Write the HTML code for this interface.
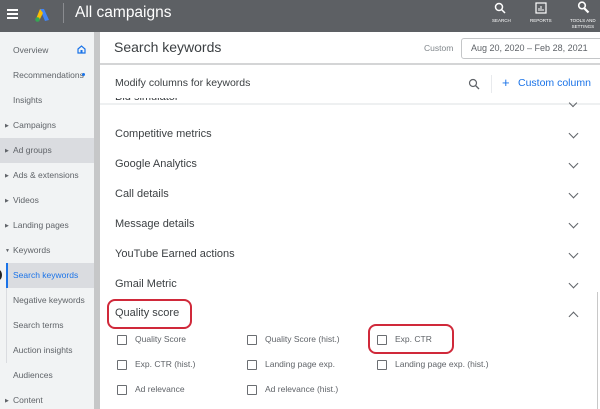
<!DOCTYPE html>
<html><head><style>
*{margin:0;padding:0;box-sizing:border-box}
body{width:600px;height:409px;overflow:hidden;font-family:"Liberation Sans",Arial,sans-serif;background:#fff;position:relative}
.hdr{position:absolute;left:0;top:0;width:600px;height:32px;background:#5d6064}
.abs{position:absolute;white-space:nowrap}
.side{position:absolute;left:0;top:32px;width:94px;height:377px;background:#f1f3f4}
.strip{position:absolute;left:94px;top:32px;width:6px;height:377px;background:#c6c7c8}
.si{position:absolute;left:13px;font-size:8.5px;color:#5f6368}
.arr{position:absolute;left:5px;font-size:5px;color:#5f6368}
.row{position:absolute;left:115px;font-size:11px;color:#3c4043}
.chev{position:absolute;left:570px;width:7px;height:7px;border-right:1.3px solid #5f6368;border-bottom:1.3px solid #5f6368;transform:rotate(45deg)}
.cb{position:absolute;width:10px;height:10px;border:1.3px solid #6b6e72;border-radius:1px}
.cl{position:absolute;font-size:8.5px;color:#5f6368}
.red{position:absolute;border:2px solid #d0293a;border-radius:8px}
</style></head><body>
<div class="hdr">
 <div class="abs" style="left:7px;top:9px;width:11px;height:2px;background:#fff;box-shadow:0 4px 0 #fff,0 8px 0 #fff"></div>
 <svg class="abs" style="left:34px;top:7px" width="16" height="16" viewBox="0 0 16 16"><path d="M6 2 L10 2 L15 13 L11 14Z" fill="#4285f4"/><path d="M6 2 L9 6 L5 14 L2 12Z" fill="#fbbc04"/><circle cx="3.5" cy="12.5" r="2.3" fill="#34a853"/></svg>
 <div class="abs" style="left:63px;top:3px;width:1px;height:20px;background:#8a8c90"></div>
 <div class="abs" style="left:75px;top:4px;font-size:15.5px;color:#fff">All campaigns</div>
 <svg class="abs" style="left:494px;top:2px" width="12" height="12" viewBox="0 0 12 12"><circle cx="5" cy="5" r="3.5" stroke="#fff" stroke-width="1.5" fill="none"/><path d="M7.5 7.5L11 11" stroke="#fff" stroke-width="1.5"/></svg>
 <div class="abs" style="left:492px;top:18px;font-size:4.5px;color:#fff">SEARCH</div>
 <svg class="abs" style="left:535px;top:2px" width="12" height="12" viewBox="0 0 12 12"><rect x="1" y="1" width="10" height="10" stroke="#fff" stroke-width="1.2" fill="none"/><path d="M4 9V6M6 9V4M8 9V7" stroke="#fff" stroke-width="1"/></svg>
 <div class="abs" style="left:530px;top:18px;font-size:4.5px;color:#fff">REPORTS</div>
 <svg class="abs" style="left:577px;top:1px" width="13" height="13" viewBox="0 0 13 13"><circle cx="5" cy="4.5" r="3.3" stroke="#fff" stroke-width="1.6" fill="none"/><path d="M7 7L11.5 11.5" stroke="#fff" stroke-width="2.2"/></svg>
 <div class="abs" style="left:570px;top:18px;font-size:4.5px;color:#fff;text-align:center;line-height:6px">TOOLS AND<br>SETTINGS</div>
</div>
<div class="side">
 <div class="abs" style="left:0;top:106px;width:94px;height:25px;background:#dadce0"></div>
 <div class="abs" style="left:6px;top:231px;width:88px;height:25px;background:#dadce0"></div>
 <div class="abs" style="left:6px;top:231px;width:2px;height:25px;background:#1a73e8"></div>
 <div class="abs" style="left:6px;top:256px;width:1px;height:75px;background:#dadce0"></div>
 <div class="abs" style="left:-4px;top:238px;width:6px;height:10px;border-radius:50%;background:#222"></div>
</div>
<div class="si" style="top:45px">Overview</div>
<svg class="abs" style="left:77px;top:45px" width="9" height="9" viewBox="0 0 9 9"><path d="M1 4L4.5 1L8 4V8H1Z" fill="none" stroke="#1a73e8" stroke-width="1.2"/><rect x="3.5" y="5" width="2" height="3" fill="#1a73e8"/></svg>
<div class="si" style="top:70px">Recommendations</div>
<div class="abs" style="left:82px;top:73px;width:3px;height:3px;border-radius:50%;background:#1a73e8"></div>
<div class="si" style="top:95px">Insights</div>
<div class="arr" style="top:123px">▶</div><div class="si" style="top:120px">Campaigns</div>
<div class="arr" style="top:148px">▶</div><div class="si" style="top:145px">Ad groups</div>
<div class="arr" style="top:173px">▶</div><div class="si" style="top:170px">Ads &amp; extensions</div>
<div class="arr" style="top:198px">▶</div><div class="si" style="top:195px">Videos</div>
<div class="arr" style="top:223px">▶</div><div class="si" style="top:220px">Landing pages</div>
<div class="arr" style="top:248px">▼</div><div class="si" style="top:245px">Keywords</div>
<div class="si" style="top:270px;color:#1a73e8">Search keywords</div>
<div class="si" style="top:295px">Negative keywords</div>
<div class="si" style="top:320px">Search terms</div>
<div class="si" style="top:345px">Auction insights</div>
<div class="si" style="top:370px">Audiences</div>
<div class="arr" style="top:398px">▶</div><div class="si" style="top:395px">Content</div>
<div class="strip"></div>

<div class="abs" style="left:100px;top:63px;width:500px;height:2px;background:#d4d5d6"></div>
<div class="abs" style="left:114px;top:39px;font-size:14px;color:#3c4043">Search keywords</div>
<div class="abs" style="left:424px;top:43px;font-size:8.5px;color:#80868b">Custom</div>
<div class="abs" style="left:461px;top:38px;width:145px;height:21px;border:1px solid #c4c6c8;border-radius:3px"></div>
<div class="abs" style="left:471px;top:43px;font-size:9px;color:#5f6368">Aug 20, 2020 – Feb 28, 2021</div>

<div class="abs" style="left:115px;top:77px;font-size:10.5px;color:#3c4043">Modify columns for keywords</div>
<svg class="abs" style="left:468px;top:78px" width="12" height="12" viewBox="0 0 12 12"><circle cx="5" cy="5" r="3.5" stroke="#5f6368" stroke-width="1.2" fill="none"/><path d="M7.5 7.5L11 11" stroke="#5f6368" stroke-width="1.3"/></svg>
<div class="abs" style="left:491px;top:75px;width:1px;height:18px;background:#e8eaed"></div>
<div class="abs" style="left:502px;top:75px;font-size:13px;color:#1a73e8">+</div>
<div class="abs" style="left:518px;top:77px;font-size:10.5px;color:#1a73e8">Custom column</div>
<div class="abs" style="left:100px;top:103px;width:500px;height:2px;background:#eef0f1"></div>

<div class="row" style="top:98px;height:7px;overflow:hidden"><span style="position:relative;top:-7px">Bid simulator</span></div>
<div class="chev" style="top:100px;width:6px;height:6px"></div>
<div class="row" style="top:128px">Competitive metrics</div><div class="chev" style="top:130px"></div>
<div class="row" style="top:158px">Google Analytics</div><div class="chev" style="top:160px"></div>
<div class="row" style="top:188px">Call details</div><div class="chev" style="top:190px"></div>
<div class="row" style="top:218px">Message details</div><div class="chev" style="top:220px"></div>
<div class="row" style="top:248px">YouTube Earned actions</div><div class="chev" style="top:250px"></div>
<div class="row" style="top:278px">Gmail Metric</div><div class="chev" style="top:280px"></div>
<div class="row" style="top:307px">Quality score</div><div class="chev" style="top:313px;transform:rotate(225deg)"></div>
<div class="red" style="left:107px;top:299px;width:85px;height:30px"></div>
<div class="abs" style="left:597px;top:292px;width:1px;height:117px;background:#c8c8c8"></div>

<div class="cb" style="left:117px;top:335px"></div><div class="cl" style="left:135px;top:334px">Quality Score</div>
<div class="cb" style="left:117px;top:360px"></div><div class="cl" style="left:135px;top:359px">Exp. CTR (hist.)</div>
<div class="cb" style="left:117px;top:385px"></div><div class="cl" style="left:135px;top:384px">Ad relevance</div>
<div class="cb" style="left:247px;top:335px"></div><div class="cl" style="left:265px;top:334px">Quality Score (hist.)</div>
<div class="cb" style="left:247px;top:360px"></div><div class="cl" style="left:265px;top:359px">Landing page exp.</div>
<div class="cb" style="left:247px;top:385px"></div><div class="cl" style="left:265px;top:384px">Ad relevance (hist.)</div>
<div class="cb" style="left:377px;top:335px"></div><div class="cl" style="left:395px;top:334px">Exp. CTR</div>
<div class="cb" style="left:377px;top:360px"></div><div class="cl" style="left:395px;top:359px">Landing page exp. (hist.)</div>
<div class="red" style="left:368px;top:324px;width:86px;height:30px"></div>
</body></html>
